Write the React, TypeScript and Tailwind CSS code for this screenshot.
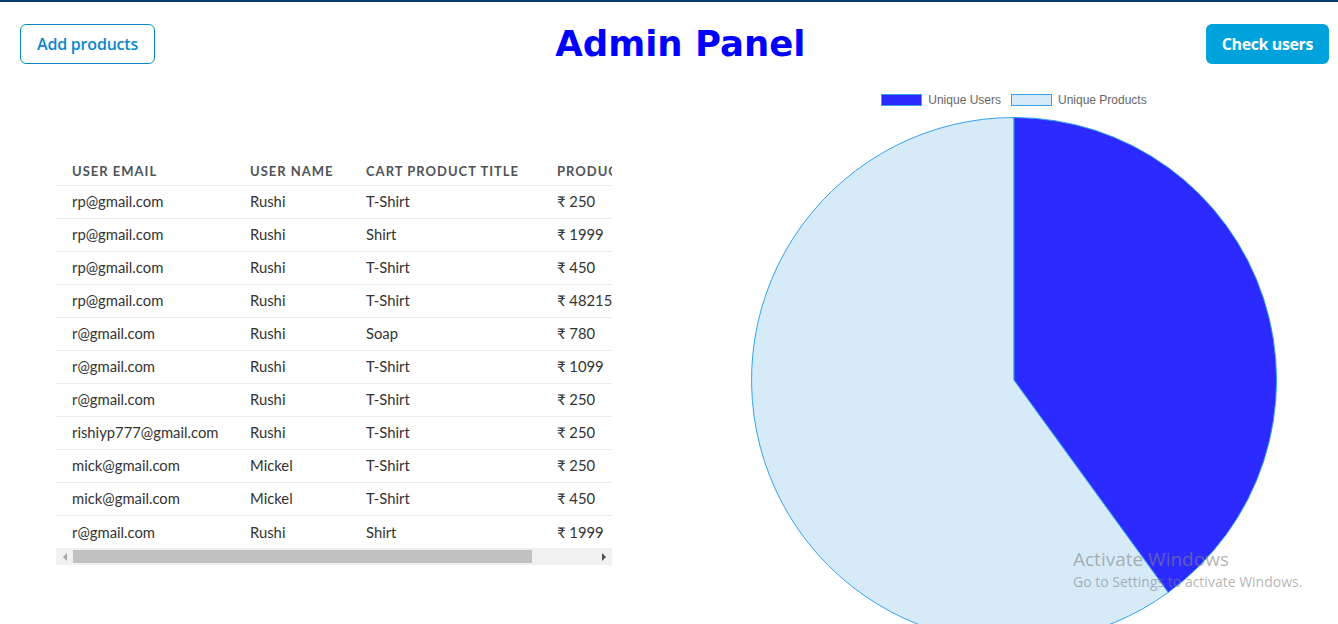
import React from "react";

const rows: [string, string, string, string][] = [
  ["rp@gmail.com", "Rushi", "T-Shirt", "₹ 250"],
  ["rp@gmail.com", "Rushi", "Shirt", "₹ 1999"],
  ["rp@gmail.com", "Rushi", "T-Shirt", "₹ 450"],
  ["rp@gmail.com", "Rushi", "T-Shirt", "₹ 48215"],
  ["r@gmail.com", "Rushi", "Soap", "₹ 780"],
  ["r@gmail.com", "Rushi", "T-Shirt", "₹ 1099"],
  ["r@gmail.com", "Rushi", "T-Shirt", "₹ 250"],
  ["rishiyp777@gmail.com", "Rushi", "T-Shirt", "₹ 250"],
  ["mick@gmail.com", "Mickel", "T-Shirt", "₹ 250"],
  ["mick@gmail.com", "Mickel", "T-Shirt", "₹ 450"],
  ["r@gmail.com", "Rushi", "Shirt", "₹ 1999"],
];

function Pie() {
  return (
    <svg width="528" height="528" viewBox="0 0 528 528" className="block">
      <path
        d="M264,264 L418.3,476.4 A262.5,262.5 0 1 1 264,1.5 Z"
        fill="#d6eaf8"
        stroke="#36a2eb"
        strokeWidth="1"
      />
      <path
        d="M264,264 L264,1.5 A262.5,262.5 0 0 1 418.3,476.4 Z"
        fill="#2b2bff"
        stroke="#36a2eb"
        strokeWidth="1"
      />
    </svg>
  );
}

export default function App() {
  return (
    <div className="relative min-h-[624px] bg-white border-t-2 border-[#0b3a6e] overflow-hidden">
      <div className="flex items-center justify-between pl-5 pr-[9px] pt-[22px]">
        <button
          className="h-10 px-4 rounded-md border border-[#0a88c8] text-[#0a88c8] text-[16px] font-semibold bg-white tracking-[-0.2px]"
          style={{ fontFamily: '"Open Sans", sans-serif' }}
        >
          Add products
        </button>
        <h1
          className="text-[35.5px] font-bold text-[#0000ff] leading-none"
          style={{ fontFamily: '"DejaVu Sans", Verdana, sans-serif' }}
        >
          Admin Panel
        </h1>
        <button
          className="h-10 px-4 rounded-md bg-[#00a2db] text-white text-[16px] font-bold tracking-[-0.4px]"
          style={{ fontFamily: '"Open Sans", sans-serif' }}
        >
          Check users
        </button>
      </div>

      <div className="flex">
        <div className="w-[690px] pl-[56px] pt-[95px]">
          <div className="w-[556px] overflow-hidden">
            <table
              className="table-fixed border-collapse w-[635px] text-left"
              style={{ fontFamily: 'Lato, "DejaVu Sans", sans-serif' }}
            >
              <colgroup>
                <col className="w-[178px]" />
                <col className="w-[116px]" />
                <col className="w-[191px]" />
                <col className="w-[150px]" />
              </colgroup>
              <thead>
                <tr className="h-[26px] border-b border-[#e6ecf1]">
                  {["User Email", "User Name", "Cart Product Title", "Product Price"].map((h) => (
                    <th
                      key={h}
                      className="pl-4 text-[13px] font-bold uppercase tracking-[1px] text-[#4f5359] whitespace-nowrap align-middle"
                    >
                      {h}
                    </th>
                  ))}
                </tr>
              </thead>
              <tbody>
                {rows.map((r, i) => (
                  <tr
                    key={i}
                    className={`h-[33px] ${i < rows.length - 1 ? "border-b border-[#e6ecf1]" : ""}`}
                  >
                    {r.map((c, j) => (
                      <td key={j} className="pl-4 text-[14.8px] text-[#333] whitespace-nowrap align-middle">
                        {c}
                      </td>
                    ))}
                  </tr>
                ))}
              </tbody>
            </table>
          </div>
          <div className="w-[556px] h-[17px] bg-[#f1f1f1] flex items-center">
            <div className="w-[17px] flex justify-center">
              <div className="w-0 h-0 border-y-[4px] border-y-transparent border-r-[4px] border-r-[#a3a3a3]" />
            </div>
            <div className="w-[459px] h-[13px] bg-[#c1c1c1]" />
            <div className="flex-1" />
            <div className="w-[17px] flex justify-center">
              <div className="w-0 h-0 border-y-[4px] border-y-transparent border-l-[4px] border-l-[#505050]" />
            </div>
          </div>
        </div>

        <div className="flex-1 flex flex-col items-center pt-[30px]">
          <div
            className="flex items-center gap-[10px] h-[12px] text-[12px] text-[#666]"
            style={{ fontFamily: '"Liberation Sans", Arial, sans-serif' }}
          >
            <div className="flex items-center gap-[6px]">
              <div className="w-[41px] h-[12px] bg-[#2b2bff] border border-[#36a2eb]" />
              <span>Unique Users</span>
            </div>
            <div className="flex items-center gap-[6px]">
              <div className="w-[41px] h-[12px] bg-[#d6eaf8] border border-[#36a2eb]" />
              <span>Unique Products</span>
            </div>
          </div>
          <div className="mt-[10px]">
            <Pie />
          </div>
        </div>
      </div>

      <div
        className="absolute left-[1073px] top-[546px] text-[rgba(130,130,130,0.6)] leading-tight pointer-events-none"
        style={{ fontFamily: '"Open Sans", "DejaVu Sans", sans-serif' }}
      >
        <div className="text-[19px]">Activate Windows</div>
        <div className="text-[14px] mt-[1px]">Go to Settings to activate Windows.</div>
      </div>
    </div>
  );
}
